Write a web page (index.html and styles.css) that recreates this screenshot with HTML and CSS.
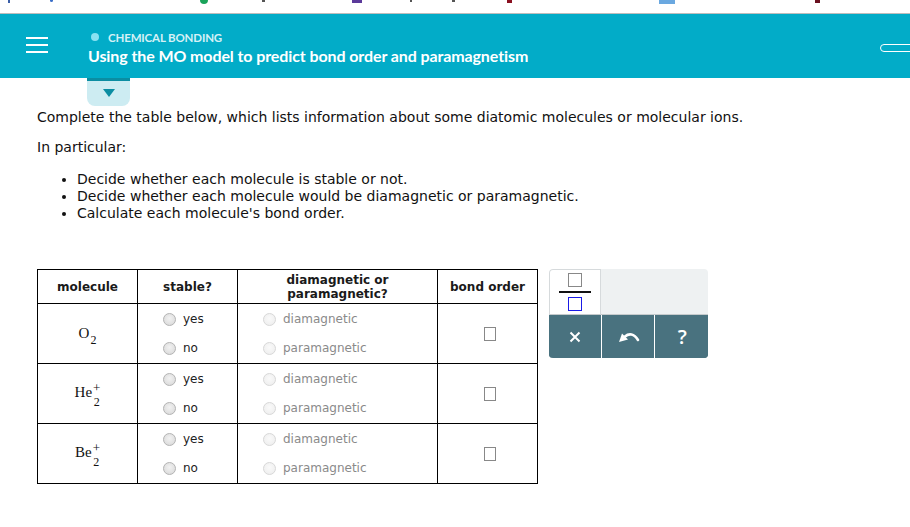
FILE: index.html
```html
<!DOCTYPE html>
<html>
<head>
<meta charset="utf-8">
<link rel="stylesheet" href="styles.css">
</head>
<body>
<div class="topstrip">
  <span class="ti ti1"></span><span class="ti ti2"></span><span class="ti ti3"></span><span class="ti ti4"></span><span class="ti ti5"></span><span class="ti ti6"></span><span class="ti ti7"></span><span class="ti ti8"></span><span class="ti ti9"></span><span class="ti ti10"></span>
</div>
<header class="hdr">
  <div class="burger"><span></span><span></span><span></span></div>
  <div class="titles">
    <div class="topic"><span class="dot"></span>CHEMICAL BONDING</div>
    <div class="title">Using the MO model to predict bond order and paramagnetism</div>
  </div>
  <div class="pill"></div>
</header>
<div class="tab"><span class="tri"></span></div>
<main class="content">
  <p class="intro">Complete the table below, which lists information about some diatomic molecules or molecular ions.</p>
  <p class="sub">In particular:</p>
  <ul class="list">
    <li>Decide whether each molecule is stable or not.</li>
    <li>Decide whether each molecule would be diamagnetic or paramagnetic.</li>
    <li>Calculate each molecule's bond order.</li>
  </ul>
  <div class="work">
    <table class="tbl">
      <thead>
        <tr>
          <th class="c1">molecule</th>
          <th class="c2">stable?</th>
          <th class="c3">diamagnetic or<br>paramagnetic?</th>
          <th class="c4">bond order</th>
        </tr>
      </thead>
      <tbody>
        <tr>
          <td class="mol">O<span class="sub2">2</span></td>
          <td class="opts"><div class="opt"><span class="radio"></span>yes</div><div class="opt"><span class="radio"></span>no</div></td>
          <td class="opts dis"><div class="opt"><span class="radio"></span>diamagnetic</div><div class="opt"><span class="radio"></span>paramagnetic</div></td>
          <td class="bo"><span class="box"></span></td>
        </tr>
        <tr>
          <td class="mol">He<span class="ss"><span class="sp">+</span><span class="sb">2</span></span></td>
          <td class="opts"><div class="opt"><span class="radio"></span>yes</div><div class="opt"><span class="radio"></span>no</div></td>
          <td class="opts dis"><div class="opt"><span class="radio"></span>diamagnetic</div><div class="opt"><span class="radio"></span>paramagnetic</div></td>
          <td class="bo"><span class="box"></span></td>
        </tr>
        <tr>
          <td class="mol">Be<span class="ss"><span class="sp">+</span><span class="sb">2</span></span></td>
          <td class="opts"><div class="opt"><span class="radio"></span>yes</div><div class="opt"><span class="radio"></span>no</div></td>
          <td class="opts dis"><div class="opt"><span class="radio"></span>diamagnetic</div><div class="opt"><span class="radio"></span>paramagnetic</div></td>
          <td class="bo"><span class="box"></span></td>
        </tr>
      </tbody>
    </table>
    <div class="pad">
      <div class="padtop">
        <div class="frac"><span class="fnum"></span><span class="fbar"></span><span class="fden"></span></div>
        <div class="fill"></div>
      </div>
      <div class="padbot">
        <div class="btn"><svg width="12" height="12" viewBox="0 0 12 12"><path d="M1.5 1.5 L10.5 10.5 M10.5 1.5 L1.5 10.5" stroke="#fff" stroke-width="2" fill="none"/></svg></div>
        <div class="btn"><svg width="22" height="12" viewBox="0 0 22 12"><path d="M7 5.5 C11 2 16 2.5 20 9" stroke="#fff" stroke-width="2.6" fill="none" stroke-linecap="round"/><path d="M1 11 L4 2.5 L10 8.5 Z" fill="#fff"/></svg></div>
        <div class="btn q">?</div>
      </div>
    </div>
  </div>
</main>
</body>
</html>
```

FILE: styles.css
```css
html, body {
  margin: 0;
  padding: 0;
  background: #fff;
}
body {
  font-family: "DejaVu Sans", Verdana, sans-serif;
  color: #111;
}
.topstrip {
  height: 13px;
  border-bottom: 1px solid #bdbdbd;
  position: relative;
  overflow: hidden;
}
.ti {
  position: absolute;
  top: 0;
  height: 3px;
  width: 4px;
}
.ti1 { left: 8px; background: #3b5fa8; width: 2px; }
.ti2 { left: 50px; background: #3b6fc8; width: 3px; height: 2px; border-radius: 0 0 2px 2px; }
.ti3 { left: 200px; background: #1aa35a; width: 8px; height: 4px; border-radius: 0 0 4px 4px; }
.ti4 { left: 262px; background: #555; width: 3px; height: 2px; }
.ti5 { left: 352px; background: #5b3a9a; width: 10px; height: 3px; }
.ti6 { left: 410px; background: #555; width: 2px; height: 2px; }
.ti7 { left: 452px; background: #555; width: 3px; height: 2px; }
.ti8 { left: 507px; background: #8a1020; width: 5px; height: 3px; }
.ti9 { left: 659px; background: #6aa8e0; width: 16px; height: 4px; }
.ti10 { left: 815px; background: #6a1020; width: 5px; height: 3px; }

.hdr {
  height: 64px;
  background: #02acc8;
  display: flex;
  align-items: flex-start;
  position: relative;
}
.burger {
  margin-left: 26px;
  margin-top: 23px;
  width: 22px;
  display: flex;
  flex-direction: column;
  gap: 5px;
}
.burger span {
  display: block;
  height: 2px;
  background: #fff;
}
.titles {
  margin-left: 40px;
  margin-top: 16px;
}
.topic {
  font-family: Lato, "Open Sans", sans-serif;
  font-size: 11.5px;
  font-weight: 700;
  color: #d4f1f6;
  display: flex;
  align-items: center;
  height: 14px;
  margin-left: 3px;
  letter-spacing: -0.15px;
}
.dot {
  width: 8px;
  height: 8px;
  border-radius: 50%;
  background: #8ae2f2;
  margin-right: 9px;
}
.title {
  font-family: Lato, "Open Sans", sans-serif;
  font-size: 16px;
  font-weight: 700;
  color: #fff;
  margin-top: 2px;
  letter-spacing: -0.1px;
}
.pill {
  position: absolute;
  right: -20px;
  top: 30px;
  width: 48px;
  height: 6px;
  border: 1px solid #fff;
  border-radius: 5px;
}
.tab {
  margin-left: 87px;
  width: 43px;
  background: #cdecf2;
  border-top: 3px solid #0b8da2;
  border-radius: 0 0 8px 8px;
  display: flex;
  justify-content: center;
  padding-top: 8px;
  box-sizing: border-box;
  height: 28px;
}
.tri {
  width: 0;
  height: 0;
  border-left: 6px solid transparent;
  border-right: 6px solid transparent;
  border-top: 8px solid #0b8da2;
}
.content {
  padding-left: 37px;
  font-size: 14px;
}
.content p {
  margin: 0;
  line-height: 17px;
}
.intro { margin-top: 3px !important; }
.sub { margin-top: 13px !important; }
.list {
  margin: 15px 0 0 0;
  padding-left: 40px;
  line-height: 17px;
}
.work {
  display: flex;
  align-items: flex-start;
  gap: 11px;
  margin-top: 47px;
}
.tbl {
  border-collapse: collapse;
  font-size: 12px;
}
.tbl th, .tbl td {
  border: 1px solid #000;
  padding: 0;
}
.tbl th {
  height: 33px;
  font-weight: 700;
  text-align: center;
  line-height: 14px;
  color: #1a1a1a;
}
.c1, .c2, .c4 { width: 99px; }
.c3 { width: 199px; }
.tbl td { height: 59px; }
.mol {
  text-align: center;
  font-family: "Liberation Serif", "Times New Roman", serif;
  font-size: 15px;
  color: #111;
}
.sub2 {
  font-size: 12px;
  position: relative;
  top: 6px;
  margin-left: 1px;
}
.ss {
  display: inline-flex;
  flex-direction: column;
  align-items: center;
  vertical-align: middle;
  font-size: 12px;
  line-height: 14px;
  margin-left: 1px;
  position: relative;
  top: 1px;
}
.sp { font-size: 13px; }
.opts {
  padding-left: 25px !important;
  vertical-align: middle;
}
.opt {
  display: flex;
  align-items: center;
  height: 29px;
  font-size: 12px;
  color: #222;
}
.radio {
  width: 11px;
  height: 11px;
  border-radius: 50%;
  border: 1px solid #b4b4b4;
  background: radial-gradient(circle at 50% 40%, #f2f2f2, #d6d6d6);
  margin-right: 7px;
}
.dis .opt { color: #8a8a8a; }
.dis .radio {
  border-color: #d8d8d8;
  background: radial-gradient(circle at 50% 40%, #fafafa, #ececec);
}
.bo { text-align: center; vertical-align: middle; }
.box {
  display: inline-block;
  width: 10px;
  height: 12px;
  border: 1px solid #888;
  vertical-align: middle;
  margin-left: 5px;
}
.pad {
  width: 159px;
  border-radius: 4px;
  overflow: hidden;
}
.padtop {
  display: flex;
  height: 45px;
  background: #eef1f2;
}
.frac {
  width: 50px;
  background: #fff;
  border: 1px solid #d6dadc;
  border-bottom-color: #c5cacc;
  border-radius: 4px 0 0 0;
  display: flex;
  flex-direction: column;
  align-items: center;
  padding-top: 3px;
  box-sizing: content-box;
  height: 41px;
}
.fnum {
  width: 12px;
  height: 12px;
  border: 1px solid #888;
}
.fbar {
  width: 32px;
  height: 2px;
  background: #111;
  margin: 4px 0 4px;
}
.fden {
  width: 12px;
  height: 12px;
  border: 1px solid #1a1ae6;
}
.padbot {
  display: flex;
  height: 43px;
  background: #49727f;
  gap: 2px;
  border-top: 1px solid #c5cacc;
}
.btn {
  flex: 1;
  display: flex;
  align-items: center;
  justify-content: center;
  background: #49727f;
  box-shadow: 1px 0 0 #fff;
}
.btn:last-child { box-shadow: none; }
.q {
  color: #fff;
  font-family: "Open Sans", sans-serif;
  font-size: 20px;
  font-weight: 600;
}
```
